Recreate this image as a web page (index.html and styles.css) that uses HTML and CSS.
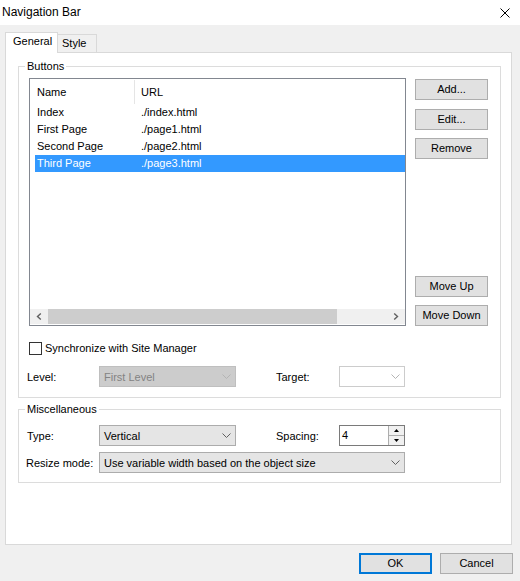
FILE: index.html
```html
<!DOCTYPE html>
<html>
<head>
<meta charset="utf-8">
<title>Navigation Bar</title>
<link rel="stylesheet" href="styles.css">
</head>
<body>
<div class="titlebar">
  <span class="title">Navigation Bar</span>
  <svg class="close" width="10" height="10" viewBox="0 0 10 10"><path d="M0.5 0.5L9.5 9.5M9.5 0.5L0.5 9.5" stroke="#000" stroke-width="1" fill="none"/></svg>
</div>
<div class="tabs">
  <div class="tab tab-active">General</div>
  <div class="tab tab-style">Style</div>
</div>
<div class="panel">
  <div class="group group-buttons">
    <span class="group-label">Buttons</span>
    <div class="list-area">
      <div class="list">
        <div class="list-head">
          <div class="hcell hname">Name</div>
          <div class="hcell hurl">URL</div>
        </div>
        <div class="list-body">
          <div class="row"><span class="c-name">Index</span><span class="c-url">./index.html</span></div>
          <div class="row"><span class="c-name">First Page</span><span class="c-url">./page1.html</span></div>
          <div class="row"><span class="c-name">Second Page</span><span class="c-url">./page2.html</span></div>
          <div class="row selected"><span class="c-name">Third Page</span><span class="c-url">./page3.html</span></div>
        </div>
        <div class="hscroll">
          <div class="sb-btn"><svg width="6" height="7" viewBox="0 0 6 7"><path d="M4.8 0.5L1.5 3.5L4.8 6.5" fill="none" stroke="#606060" stroke-width="1.4"/></svg></div>
          <div class="thumb"></div>
          <div class="track"></div>
          <div class="sb-btn"><svg width="6" height="7" viewBox="0 0 6 7"><path d="M1.2 0.5L4.5 3.5L1.2 6.5" fill="none" stroke="#606060" stroke-width="1.4"/></svg></div>
        </div>
      </div>
      <div class="side">
        <button class="btn">Add...</button>
        <button class="btn btn-edit">Edit...</button>
        <button class="btn btn-remove">Remove</button>
        <div class="spacer"></div>
        <button class="btn">Move Up</button>
        <button class="btn btn-down">Move Down</button>
      </div>
    </div>
    <div class="check-row">
      <span class="checkbox"></span>
      <span>Synchronize with Site Manager</span>
    </div>
    <div class="field-row">
      <span class="lbl">Level:</span>
      <div class="combo combo-level disabled">
        <span>First Level</span>
        <svg width="9" height="5" viewBox="0 0 9 5"><path d="M0.5 0.5L4.5 4.5L8.5 0.5" fill="none" stroke="#b4b4b4"/></svg>
      </div>
      <span class="lbl lbl-right">Target:</span>
      <div class="combo combo-target">
        <span></span>
        <svg width="9" height="5" viewBox="0 0 9 5"><path d="M0.5 0.5L4.5 4.5L8.5 0.5" fill="none" stroke="#b4b4b4"/></svg>
      </div>
    </div>
  </div>
  <div class="group group-misc">
    <span class="group-label">Miscellaneous</span>
    <div class="field-row">
      <span class="lbl">Type:</span>
      <div class="combo combo-type">
        <span>Vertical</span>
        <svg width="9" height="5" viewBox="0 0 9 5"><path d="M0.5 0.5L4.5 4.5L8.5 0.5" fill="none" stroke="#606060"/></svg>
      </div>
      <span class="lbl lbl-right">Spacing:</span>
      <div class="spin">
        <span class="spin-val">4</span>
        <div class="spin-btns">
          <div class="spin-btn"><svg width="5" height="3" viewBox="0 0 5 3"><path d="M0 3H5L2.5 0Z" fill="#000"/></svg></div>
          <div class="spin-btn"><svg width="5" height="3" viewBox="0 0 5 3"><path d="M0 0H5L2.5 3Z" fill="#000"/></svg></div>
        </div>
      </div>
    </div>
    <div class="field-row">
      <span class="lbl lbl-resize">Resize mode:</span>
      <div class="combo combo-resize">
        <span>Use variable width based on the object size</span>
        <svg width="9" height="5" viewBox="0 0 9 5"><path d="M0.5 0.5L4.5 4.5L8.5 0.5" fill="none" stroke="#606060"/></svg>
      </div>
    </div>
  </div>
</div>
<div class="footer">
  <button class="btn btn-default">OK</button>
  <button class="btn">Cancel</button>
</div>
</body>
</html>
```

FILE: styles.css
```css
* { box-sizing: border-box; }
html, body { margin: 0; padding: 0; }
body {
  width: 520px;
  height: 581px;
  overflow: hidden;
  background: #f0f0f0;
  font-family: "Liberation Sans", Arial, sans-serif;
  font-size: 11px;
  color: #000;
}

.titlebar {
  height: 25px;
  background: #fff;
  display: flex;
  align-items: center;
  justify-content: space-between;
  padding: 0 10px 0 2px;
}
.title { font-size: 12px; line-height: 25px; }
.close { display: block; }

.tabs {
  display: flex;
  align-items: flex-end;
  height: 20px;
  margin: 7px 0 0 5px;
}
.tab {
  border: 1px solid #d9d9d9;
  border-bottom: none;
  line-height: 17px;
}
.tab-active {
  width: 53px;
  height: 21px;
  margin-bottom: -1px;
  padding-left: 7px;
  background: #fff;
  position: relative;
  z-index: 1;
}
.tab-style {
  width: 40px;
  height: 18px;
  margin-left: -1px;
  padding-left: 4px;
  background: #f0f0f0;
}

.panel {
  margin-left: 5px;
  width: 507px;
  height: 493px;
  border: 1px solid #d9d9d9;
  background: #fff;
  padding: 13px 0 0 12px;
}

.group {
  position: relative;
  width: 483px;
  border: 1px solid #dcdcdc;
}
.group-label {
  position: absolute;
  left: 6px;
  top: -7px;
  line-height: 13px;
  padding: 0 2px;
  background: #fff;
}
.group-buttons {
  height: 332px;
  padding: 11px 0 10px 10px;
}
.group-misc {
  height: 74px;
  margin-top: 11px;
  padding: 15px 0 0 8px;
}

.list-area { display: flex; height: 248px; }
.list {
  width: 377px;
  height: 248px;
  border: 1px solid #828790;
  background: #fff;
  display: flex;
  flex-direction: column;
}
.list-head { display: flex; height: 25px; flex: none; }
.hcell { margin-top: 1px; height: 24px; line-height: 24px; }
.hname { width: 105px; padding-left: 7px; border-right: 1px solid #e5e5e5; }
.hurl { padding-left: 6px; }
.list-body { flex: 1; }
.row {
  display: flex;
  height: 17px;
  line-height: 17px;
  margin-left: 5px;
  white-space: nowrap;
}
.c-name { width: 106px; padding-left: 2px; }
.selected { background: #3399ff; color: #fff; }

.hscroll {
  flex: none;
  height: 15px;
  margin-bottom: 1px;
  display: flex;
  background: #f0f0f0;
}
.sb-btn {
  width: 18px;
  display: flex;
  align-items: center;
  justify-content: center;
}
.sb-btn svg { display: block; }
.thumb { width: 289px; background: #cdcdcd; }
.track { flex: 1; }

.side {
  display: flex;
  flex-direction: column;
  margin-left: 9px;
  padding-top: 1px;
}
.spacer { flex: 1; }
.btn {
  display: block;
  width: 73px;
  height: 21px;
  border: 1px solid #adadad;
  background: #e1e1e1;
  font: inherit;
  color: #000;
  padding: 0;
  margin: 0;
  line-height: 19px;
  text-align: center;
}
.btn-edit { margin-top: 9px; }
.btn-remove { margin-top: 8px; }
.btn-down { margin-top: 8px; }
.btn-default { border: 2px solid #0078d7; line-height: 17px; }

.check-row {
  display: flex;
  align-items: center;
  height: 13px;
  margin-top: 16px;
  line-height: 13px;
}
.checkbox {
  width: 13px;
  height: 13px;
  border: 1px solid #333;
  background: #fff;
  margin-right: 3px;
}

.field-row {
  display: flex;
  align-items: center;
  height: 21px;
}
.group-buttons .field-row { margin: 11px 0 0 -2px; }
.group-misc .field-row + .field-row { margin-top: 6px; }
.lbl { width: 72px; }
.lbl-resize { margin-left: -1px; width: 73px; }
.lbl-right { width: 63px; margin-left: 40px; }

.combo {
  height: 21px;
  display: flex;
  align-items: center;
  justify-content: space-between;
  padding: 0 4px;
  border: 1px solid #acacac;
  background: #e5e5e5;
  white-space: nowrap;
}
.combo svg { display: block; flex: none; }
.combo-level, .combo-type { width: 137px; }
.combo-target { width: 66px; background: #fff; border-color: #cccccc; }
.combo-resize { width: 306px; }
.disabled { background: #cccccc; border-color: #bfbfbf; color: #838383; }

.spin {
  width: 66px;
  height: 21px;
  display: flex;
  border: 1px solid #7a7a7a;
  background: #fff;
}
.spin-val { flex: 1; padding-left: 2px; line-height: 19px; }
.spin-btns {
  width: 16px;
  display: flex;
  flex-direction: column;
  border-left: 1px solid #adadad;
}
.spin-btn {
  flex: 1;
  display: flex;
  align-items: center;
  justify-content: center;
  background: #f0f0f0;
}
.spin-btn + .spin-btn { border-top: 1px solid #adadad; }
.spin-btn svg { display: block; }

.footer {
  display: flex;
  justify-content: flex-end;
  gap: 8px;
  margin-top: 8px;
  padding-right: 7px;
}
```
